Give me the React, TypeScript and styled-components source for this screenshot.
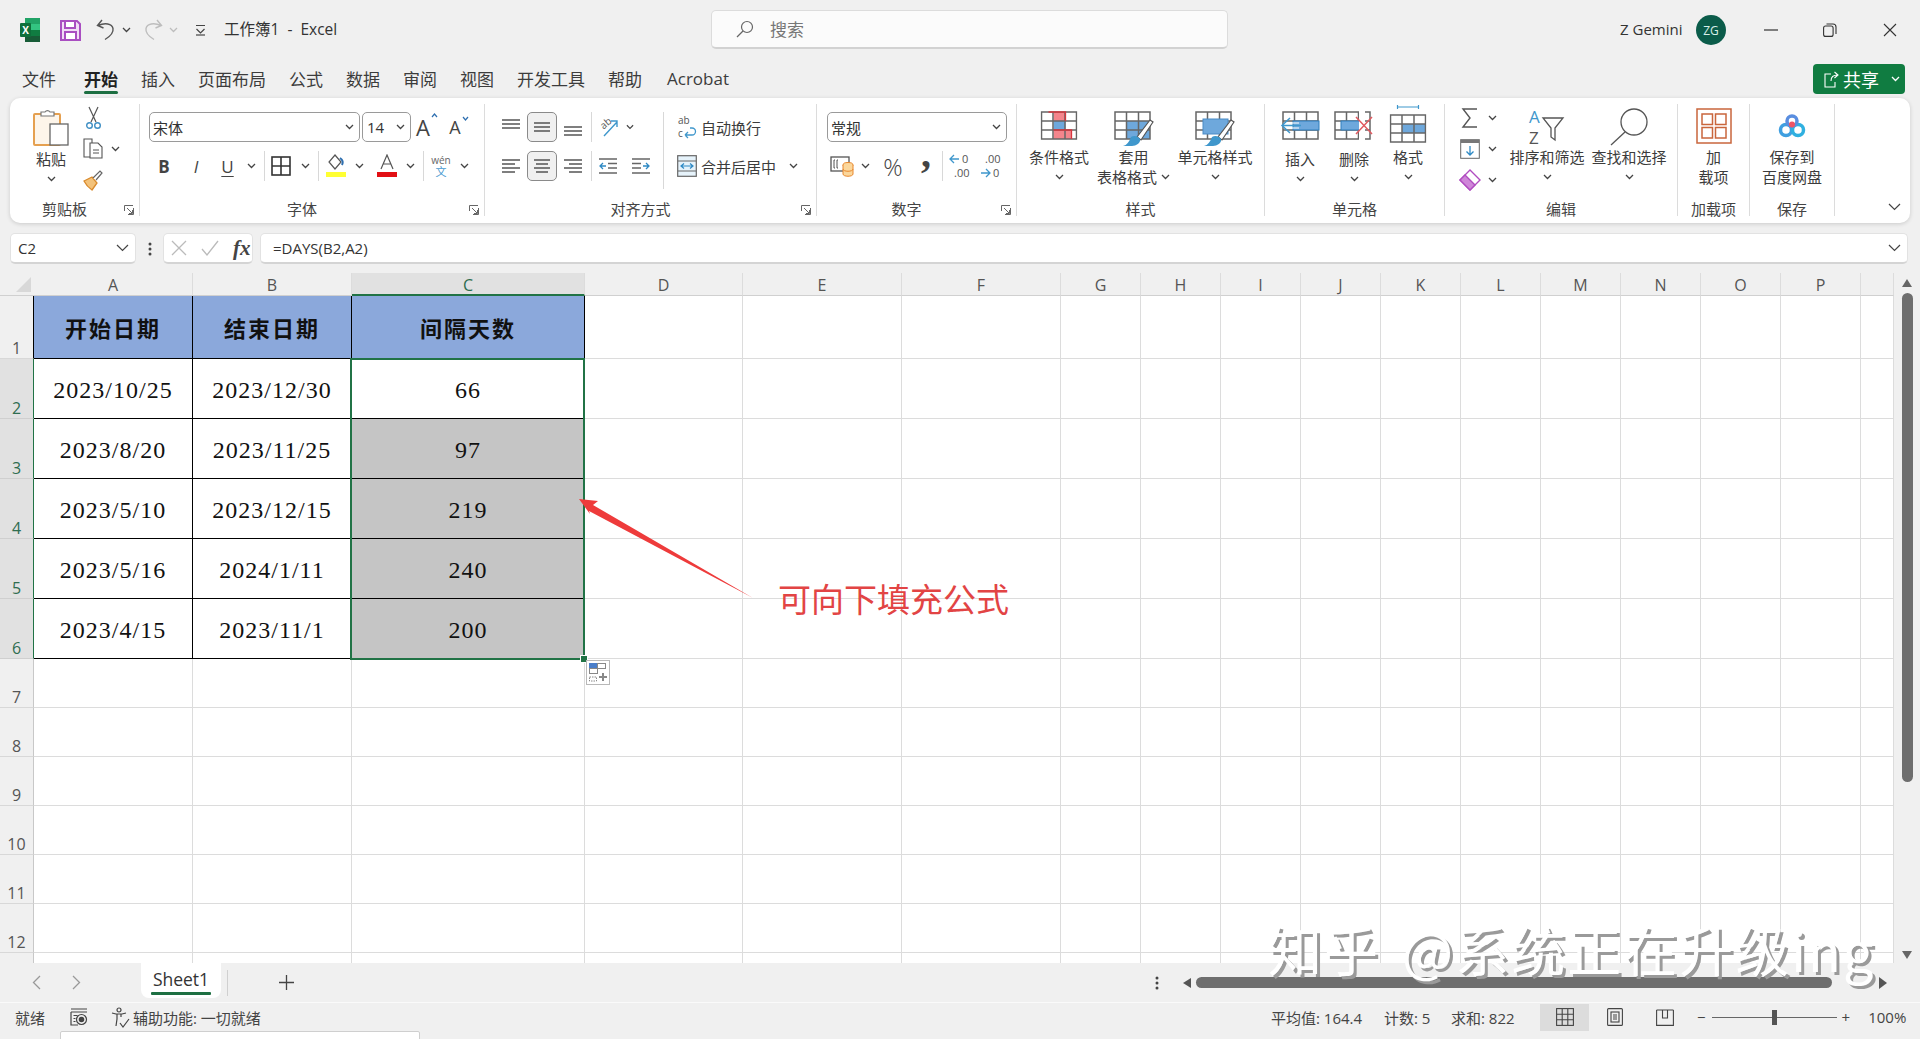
import React from 'react'
import styled, { createGlobalStyle } from 'styled-components'

const UI_FONT = '"Open Sans", "Noto Sans CJK SC", sans-serif'
const CJK_FONT = '"Noto Sans CJK SC", "Open Sans", sans-serif'
const GREEN = '#217346'

const GlobalStyle = createGlobalStyle`
  html, body { margin: 0; padding: 0; background: #f0f0f0; }
  * { box-sizing: border-box; }
  #root { width: 1920px; height: 1039px; }
`

const Page = styled.div`
  position: relative;
  width: 1920px;
  height: 1039px;
  overflow: hidden;
  display: flex;
  flex-direction: column;
  background: #f0f0f0;
  color: #3c3c3c;
  font-family: ${CJK_FONT};
`

/* ---------- title bar ---------- */
const TitleBar = styled.header`
  height: 58px;
  flex: none;
  display: grid;
  grid-template-columns: 711px 517px 1fr;
  align-items: center;
  padding-top: 2px;
`
const QuickAccess = styled.div`
  display: flex;
  align-items: center;
  padding-left: 20px;
`
const DocTitle = styled.span`
  margin: -3px 0 0 18px;
  font-size: 15.5px;
  font-family: ${UI_FONT};
  white-space: pre;
  color: #333;
`
const SearchBox = styled.div`
  height: 39px;
  margin-top: -2px;
  background: #fbfbfb;
  border: 1px solid #dcdcdc;
  border-bottom: 2px solid #d2d2d2;
  border-radius: 5px;
  display: flex;
  align-items: center;
  padding-left: 24px;
  gap: 16px;
  font-size: 17px;
  line-height: 34px;
  color: #777;
`
const UserArea = styled.div`
  display: flex;
  align-items: center;
  padding-left: 392px;
  font-family: ${UI_FONT};
`
const UserName = styled.span`
  font-size: 15px;
  width: 65px;
  margin-top: -2px;
  white-space: nowrap;
  color: #333;
`
const Avatar = styled.div`
  width: 30px;
  height: 30px;
  margin-left: 11px;
  border-radius: 50%;
  background: #0b5c4a;
  color: #d8efe8;
  font-size: 12px;
  display: flex;
  align-items: center;
  justify-content: center;
`
const WindowButton = styled.div<{ $ml: number }>`
  width: 16px;
  height: 16px;
  margin-left: ${(p) => p.$ml}px;
  display: flex;
  align-items: center;
  justify-content: center;
`

/* ---------- tabs ---------- */
const TabBar = styled.nav`
  height: 40px;
  flex: none;
  display: flex;
  align-items: flex-start;
  padding-left: 22px;
  gap: 23px;
  position: relative;
`
const Tab = styled.div<{ $active?: boolean }>`
  position: relative;
  height: 36px;
  line-height: 41px;
  font-size: 17px;
  font-weight: ${(p) => (p.$active ? 700 : 400)};
  color: ${(p) => (p.$active ? '#222' : '#3c3c3c')};
  font-family: ${CJK_FONT};
  white-space: nowrap;
  ${(p) => (p.$active ? 'margin-left: 5px;' : '')}
  ${(p) =>
    p.$active &&
    `&::after {
      content: '';
      position: absolute;
      left: 0;
      right: 0;
      bottom: 0;
      height: 3px;
      border-radius: 2px;
      background: #1d6f42;
    }`}
`
const TabText = styled(Tab)`
  font-family: ${UI_FONT};
  margin-left: 2px;
`
const ShareButton = styled.div`
  position: absolute;
  left: 1813px;
  top: 6px;
  width: 92px;
  height: 30px;
  border-radius: 4px;
  background: #107c41;
  color: #fff;
  font-size: 18px;
  line-height: 28px;
  display: flex;
  align-items: center;
  padding-left: 11px;
  gap: 3px;
`

/* ---------- ribbon ---------- */
const Ribbon = styled.section`
  position: relative;
  height: 125px;
  flex: none;
  margin: 0 10px;
  padding-top: 6px;
  background: #fff;
  border-radius: 10px;
  box-shadow: 0 1px 4px rgba(0, 0, 0, 0.16);
  display: flex;
  align-items: flex-start;
`
const Group = styled.div<{ $w: number; $last?: boolean }>`
  width: ${(p) => p.$w}px;
  height: 112px;
  flex: none;
  display: flex;
  flex-direction: column;
  border-right: ${(p) => (p.$last ? 'none' : '1px solid #dcdcdc')};
`
const GroupBody = styled.div<{ $pl?: number; $col?: boolean }>`
  height: 92px;
  flex: none;
  display: flex;
  flex-direction: ${(p) => (p.$col ? 'column' : 'row')};
  padding-left: ${(p) => p.$pl ?? 0}px;
`
const GroupLabel = styled.div<{ $launcher?: boolean }>`
  position: relative;
  height: 20px;
  line-height: 26px;
  font-size: 15px;
  text-align: center;
  padding-right: ${(p) => (p.$launcher ? 20 : 0)}px;
  color: #444;
`
const Launcher = styled.span`
  position: absolute;
  right: 5px;
  top: 9px;
  width: 10px;
  height: 10px;
  display: flex;
`
const BigTool = styled.div<{ $w: number; $icon?: number }>`
  width: ${(p) => p.$w}px;
  flex: none;
  display: flex;
  flex-direction: column;
  align-items: center;
  padding-top: ${(p) => p.$icon ?? 43}px;
  position: relative;
  font-size: 15px;
  line-height: 20px;
  color: #3c3c3c;
  white-space: nowrap;
`
const BigIcon = styled.span<{ $top: number }>`
  position: absolute;
  top: ${(p) => p.$top}px;
  left: 50%;
  transform: translateX(-50%);
  display: flex;
`
const ToolLine = styled.span`
  height: 20px;
  display: flex;
  align-items: center;
  justify-content: center;
  gap: 4px;
`
const Rows = styled.div<{ $w?: number }>`
  display: flex;
  flex-direction: column;
  gap: 9px;
  padding-top: 8px;
  ${(p) => (p.$w ? `width: ${p.$w}px; flex: none;` : '')}
`
const Row = styled.div<{ $pl?: number }>`
  height: 30px;
  display: flex;
  align-items: center;
  padding-left: ${(p) => p.$pl ?? 0}px;
`
const Stack = styled.div`
  display: flex;
  flex-direction: column;
  margin-top: -2px;
`
const StackRow = styled.div`
  height: 31.5px;
  display: flex;
  align-items: center;
`
const Slot = styled.span<{ $w: number }>`
  width: ${(p) => p.$w}px;
  flex: none;
  height: 30px;
  display: flex;
  align-items: center;
  justify-content: center;
  font-family: ${UI_FONT};
  color: #444;
`
const PressedSlot = styled(Slot)`
  background: #f0f0f0;
  border: 1px solid #8a8a8a;
  border-radius: 5px;
`
const Gap = styled.span<{ $w: number }>`
  width: ${(p) => p.$w}px;
  flex: none;
`
const MiniSep = styled.span`
  width: 1px;
  height: 30px;
  flex: none;
  background: #d8d8d8;
`
const BlockSep = styled.span`
  width: 1px;
  height: 77px;
  margin-top: 8px;
  flex: none;
  background: #d8d8d8;
`
const SelectBox = styled.div<{ $w: number; $ml?: number }>`
  width: ${(p) => p.$w}px;
  margin-left: ${(p) => p.$ml ?? 0}px;
  flex: none;
  height: 30px;
  border: 1px solid #9a9a9a;
  border-radius: 5px;
  display: flex;
  align-items: center;
  justify-content: space-between;
  padding: 0 5px 0 3px;
  font-size: 15px;
  color: #333;
`
const SizeText = styled.span`
  font-family: ${UI_FONT};
  font-size: 15px;
  padding-left: 1px;
`
const LetterButton = styled.span<{ $italic?: boolean; $under?: boolean; $weight?: number; $size?: number }>`
  font-family: ${UI_FONT};
  font-size: ${(p) => p.$size ?? 17}px;
  font-weight: ${(p) => p.$weight ?? 400};
  font-style: ${(p) => (p.$italic ? 'italic' : 'normal')};
  text-decoration: ${(p) => (p.$under ? 'underline' : 'none')};
  text-underline-offset: 3px;
  color: #444;
`
const GrowGlyph = styled.span`
  display: flex;
  align-items: flex-start;
  gap: 1px;
`
const RowText = styled.span<{ $w?: number }>`
  font-size: 15px;
  color: #3c3c3c;
  white-space: nowrap;
  ${(p) => (p.$w ? `width: ${p.$w}px;` : '')}
`
const WenGlyph = styled.span`
  display: flex;
  flex-direction: column;
  align-items: center;
  font-size: 10px;
  line-height: 11px;
  color: #666;
`
const WenChar = styled.span`
  color: #4a9ad0;
  font-size: 11px;
`
const Percent = styled.span`
  font-family: ${UI_FONT};
  font-size: 24px;
  font-weight: 300;
  color: #444;
`
const Comma = styled.span`
  font-family: 'Liberation Serif', serif;
  font-weight: 700;
  font-size: 40px;
  line-height: 30px;
  height: 30px;
  color: #444;
  transform: translateY(-12px);
`
const CollapseButton = styled.span`
  position: absolute;
  right: 9px;
  bottom: 12px;
  display: flex;
`

/* ---------- formula bar ---------- */
const FormulaBar = styled.div`
  height: 31px;
  flex: none;
  margin: 10px 12px 9px 10px;
  display: flex;
  align-items: stretch;
`
const FieldBox = styled.div<{ $w?: number; $pl?: number }>`
  ${(p) => (p.$w ? `width: ${p.$w}px; flex: none;` : 'flex: 1;')}
  background: #fff;
  border: 1px solid #e2e2e2;
  border-bottom: 2px solid #d4d4d4;
  border-radius: 5px;
  display: flex;
  align-items: center;
  justify-content: space-between;
  padding: 0 6px 0 ${(p) => p.$pl ?? 12}px;
  font-family: ${UI_FONT};
  font-size: 15px;
  color: #333;
`
const FxBox = styled(FieldBox)`
  padding: 0 0 0 7px;
  margin-right: 7px;
  justify-content: flex-start;
  gap: 14px;
`
const FxText = styled.span`
  font-family: 'Liberation Serif', serif;
  font-style: italic;
  font-weight: 700;
  font-size: 21px;
  color: #444;
`
const DotsColumn = styled.div`
  width: 27px;
  flex: none;
  display: flex;
  align-items: center;
  justify-content: center;
  font-weight: 700;
`

/* ---------- sheet ---------- */
const SheetArea = styled.div`
  height: 690px;
  flex: none;
  display: flex;
`
const COLS = [34, 159, 159, 233, 158, 159, 159, 80, 80, 80, 80, 80, 80, 80, 80, 80, 80, 33]
const LETTERS = ['A', 'B', 'C', 'D', 'E', 'F', 'G', 'H', 'I', 'J', 'K', 'L', 'M', 'N', 'O', 'P', '']
const ROW_COUNT = 13

const Sheet = styled.div`
  position: relative;
  width: 1894px;
  height: 690px;
  overflow: hidden;
  background: #fff;
  display: grid;
  grid-template-columns: ${COLS.map((c) => c + 'px').join(' ')};
  grid-template-rows: 23px 63px repeat(5, 60px) repeat(7, 49px);
`
const Corner = styled.div`
  background: #f0f0f0;
  border-bottom: 1px solid #d0d0d0;
  display: flex;
  align-items: flex-end;
  justify-content: flex-end;
  padding: 0 3px 3px 0;
`
const ColHead = styled.div<{ $active?: boolean }>`
  background: ${(p) => (p.$active ? '#e1e1e1' : '#f0f0f0')};
  border-right: 1px solid #dcdcdc;
  border-bottom: ${(p) => (p.$active ? `2px solid ${GREEN}` : '1px solid #d0d0d0')};
  color: ${(p) => (p.$active ? '#2f6d50' : '#555')};
  font-family: ${UI_FONT};
  font-size: 16px;
  line-height: 24px;
  text-align: center;
`
const RowHead = styled.div<{ $active?: boolean; $edge?: 'black' | 'green' }>`
  background: ${(p) => (p.$active ? '#e1e1e1' : '#f0f0f0')};
  color: ${(p) => (p.$active ? '#2f6d50' : '#555')};
  border-bottom: 1px solid ${(p) => (p.$active ? '#cfcfcf' : '#d8d8d8')};
  border-right: 1px solid ${(p) => (p.$edge === 'black' ? '#000' : p.$edge === 'green' ? GREEN : '#c8c8c8')};
  font-family: ${UI_FONT};
  font-size: 16px;
  line-height: 20px;
  display: flex;
  align-items: flex-end;
  justify-content: center;
`
const Cell = styled.div<{ $table?: boolean; $fill?: string; $head?: boolean }>`
  background: ${(p) => p.$fill ?? '#fff'};
  border-right: 1px solid ${(p) => (p.$table ? '#000' : '#dcdcdc')};
  border-bottom: 1px solid ${(p) => (p.$table ? '#000' : '#dcdcdc')};
  display: flex;
  align-items: center;
  justify-content: center;
  color: #111;
  font-family: ${(p) => (p.$head ? CJK_FONT : '"Liberation Serif", serif')};
  font-size: ${(p) => (p.$head ? 22 : 24)}px;
  font-weight: ${(p) => (p.$head ? 700 : 400)};
  letter-spacing: ${(p) => (p.$head ? 2 : 1)}px;
  padding-top: ${(p) => (p.$head ? 0 : 3)}px;
`
const Selection = styled.div`
  position: absolute;
  left: 350px;
  top: 85px;
  width: 235px;
  height: 302px;
  border: 2px solid ${GREEN};
  pointer-events: none;
`
const FillHandle = styled.span`
  position: absolute;
  right: -5px;
  bottom: -5px;
  width: 8px;
  height: 8px;
  background: ${GREEN};
  border: 1px solid #fff;
`
const PasteOptions = styled.div`
  position: absolute;
  left: 586px;
  top: 387px;
  width: 24px;
  height: 25px;
  background: #fff;
  border: 1px solid #b8b8b8;
  display: flex;
  align-items: center;
  justify-content: center;
`
const ArrowLayer = styled.svg`
  position: absolute;
  left: 570px;
  top: 220px;
`
const Annotation = styled.div`
  position: absolute;
  left: 778px;
  top: 301px;
  font-size: 33px;
  line-height: 48px;
  color: #e24444;
  white-space: nowrap;
`
const VScroll = styled.div`
  width: 26px;
  flex: none;
  display: flex;
  flex-direction: column;
  align-items: center;
  padding: 6px 0 4px;
`
const TriUp = styled.span`
  width: 0;
  height: 0;
  border-left: 5px solid transparent;
  border-right: 5px solid transparent;
  border-bottom: 8px solid #666;
`
const TriDown = styled(TriUp)`
  margin-top: auto;
  transform: rotate(180deg);
`
const VThumb = styled.div`
  width: 11px;
  height: 489px;
  margin-top: 6px;
  border-radius: 6px;
  background: #6e6e6e;
`

/* ---------- sheet bar ---------- */
const SheetBar = styled.div`
  height: 39px;
  flex: none;
  display: flex;
  align-items: center;
  font-family: ${UI_FONT};
`
const NavSlot = styled.span<{ $w: number; $ml?: number }>`
  width: ${(p) => p.$w}px;
  margin-left: ${(p) => p.$ml ?? 0}px;
  height: 20px;
  flex: none;
  display: flex;
  align-items: center;
  justify-content: center;
  font-size: 18px;
  font-weight: 700;
  color: #444;
`
const SheetTab = styled.div`
  position: relative;
  width: 80px;
  height: 35px;
  margin-left: 55px;
  align-self: flex-start;
  flex: none;
  background: #fff;
  border-radius: 0 0 8px 8px;
  text-align: center;
  font-size: 17.500px;
  line-height: 32px;
  color: #333;
  &::after {
    content: '';
    position: absolute;
    left: 10px;
    right: 10px;
    bottom: 3px;
    height: 3px;
    background: #1d6f42;
    border-radius: 1px;
  }
`
const TabDivider = styled.span`
  width: 1px;
  height: 26px;
  margin-left: 6px;
  background: #d0d0d0;
`
const HThumb = styled.div`
  width: 636px;
  height: 11px;
  margin-left: 5px;
  border-radius: 6px;
  background: #6e6e6e;
`
const TriLeft = styled.span<{ $ml?: number }>`
  margin-left: ${(p) => p.$ml ?? 0}px;
  width: 0;
  height: 0;
  border-top: 5px solid transparent;
  border-bottom: 5px solid transparent;
  border-right: 8px solid #555;
`
const TriRight = styled.span<{ $ml: number }>`
  margin-left: ${(p) => p.$ml}px;
  width: 0;
  height: 0;
  border-top: 6px solid transparent;
  border-bottom: 6px solid transparent;
  border-left: 8px solid #555;
`

/* ---------- status bar ---------- */
const StatusBar = styled.footer`
  height: 29px;
  flex: none;
  border-top: 1px solid #fafafa;
  display: flex;
  align-items: center;
  padding-left: 15px;
  color: #444;
`
const StatusText = styled.span<{ $ml?: number; $w?: number }>`
  margin-left: ${(p) => p.$ml ?? 0}px;
  ${(p) => (p.$w ? `width: ${p.$w}px;` : '')}
  flex: none;
  white-space: nowrap;
  font-family: ${UI_FONT};
  font-size: 15px;
`
const ViewButton = styled.span<{ $w: number; $on?: boolean; $ml?: number }>`
  width: ${(p) => p.$w}px;
  margin-left: ${(p) => p.$ml ?? 0}px;
  height: 27px;
  flex: none;
  display: flex;
  align-items: center;
  justify-content: center;
  background: ${(p) => (p.$on ? '#dcdcdc' : 'transparent')};
`
const ZoomSlider = styled.div`
  position: relative;
  width: 125px;
  height: 1px;
  margin-left: 6px;
  flex: none;
  background: #666;
`
const ZoomThumb = styled.span`
  position: absolute;
  left: 60px;
  top: -7px;
  width: 5px;
  height: 15px;
  background: #555;
`
const BottomStrip = styled.div`
  flex: 1;
  padding-left: 60px;
`
const TaskWindow = styled.div`
  width: 360px;
  height: 12px;
  background: #fff;
  border: 1px solid #cfcfcf;
  border-radius: 2px 2px 0 0;
`
const Watermark = styled.div`
  position: absolute;
  left: 1268px;
  top: 914px;
  font-size: 54px;
  line-height: 70px;
  white-space: nowrap;
  color: #fff;
  font-family: ${CJK_FONT};
  text-shadow: 3px 3px 0 #9a9a9a;
  letter-spacing: 2px;
  word-spacing: 8px;
  pointer-events: none;
`

/* ---------- icons ---------- */
const Chevron = ({ c = '#444' }: { c?: string }) => (
  <svg width="9" height="6" viewBox="0 0 9 6">
    <path d="M1 1l3.5 3.5L8 1" fill="none" stroke={c} strokeWidth="1.3" />
  </svg>
)
const GrowArrow = ({ up }: { up?: boolean }) => (
  <svg width="7" height="8" viewBox="0 0 7 8">
    <path d={up ? 'M1 5l2.500-3L6 5' : 'M1 2l2.500 3L6 2'} fill="none" stroke="#2e6fb0" strokeWidth="1.200" />
  </svg>
)
const LauncherIcon = () => (
  <svg width="10" height="10" viewBox="0 0 10 10" fill="none" stroke="#666">
    <path d="M.5 6V.5H9M9.5 3v6.5H4M3 3l5 5M8.5 5v3.5H5" />
  </svg>
)
const ExcelLogo = () => (
  <svg width="20" height="24" viewBox="0 0 20 24">
    <rect x="5" y="0" width="15" height="6" fill="#21a366" />
    <rect x="5" y="6" width="15" height="6" fill="#33c481" />
    <rect x="5" y="12" width="15" height="6" fill="#107c41" />
    <rect x="5" y="18" width="15" height="6" fill="#185c37" />
    <rect x="0" y="5" width="11" height="14" rx="1" fill="#0e6f3b" />
    <text x="5.5" y="16" fontSize="10" fontWeight="700" fill="#fff" textAnchor="middle" fontFamily="Open Sans">X</text>
  </svg>
)
const SaveIcon = () => (
  <svg width="21" height="21" viewBox="0 0 21 21">
    <path d="M1 1h16l3 3v16H1z" fill="#f0dcf5" stroke="#a94ec1" strokeWidth="2" />
    <rect x="5" y="1" width="10" height="7" fill="#fff" stroke="#a94ec1" strokeWidth="2" />
    <rect x="5" y="12" width="11" height="8" fill="#fff" stroke="#a94ec1" strokeWidth="2" />
  </svg>
)
const UndoIcon = ({ c = '#555', flip }: { c?: string; flip?: boolean }) => (
  <svg width="20" height="22" viewBox="0 0 20 22" style={flip ? { transform: 'scaleX(-1)' } : undefined}>
    <path d="M6 1L1.5 6.5 7.5 9M2 6.5c7-3 14-2 15 3 .8 4.5-3 8-8 11" fill="none" stroke={c} strokeWidth="1.4" />
  </svg>
)
const CustomizeIcon = () => (
  <svg width="11" height="12" viewBox="0 0 11 12" fill="none" stroke="#444" strokeWidth="1.2">
    <path d="M1 1.5h9M1.5 5l4 4 4-4" />
    <path d="M1 11h9" />
  </svg>
)
const SearchIcon = () => (
  <svg width="18" height="18" viewBox="0 0 18 18" fill="none" stroke="#666" strokeWidth="1.2">
    <circle cx="11" cy="7" r="5.5" />
    <path d="M7 11l-6 6" />
  </svg>
)
const MinIcon = () => (
  <svg width="14" height="2" viewBox="0 0 14 2">
    <path d="M0 1h14" stroke="#333" strokeWidth="1.2" />
  </svg>
)
const RestoreIcon = () => (
  <svg width="14" height="14" viewBox="0 0 14 14" fill="none" stroke="#333" strokeWidth="1.1">
    <rect x=".6" y="3" width="9.5" height="10.4" rx="2" />
    <path d="M3.5 1h6.5a3 3 0 0 1 3 3v7" />
  </svg>
)
const CloseIcon = () => (
  <svg width="14" height="14" viewBox="0 0 14 14">
    <path d="M1 1l12 12M13 1L1 13" stroke="#333" strokeWidth="1.1" />
  </svg>
)
const ShareIcon = () => (
  <svg width="16" height="17" viewBox="0 0 16 17" fill="none" stroke="#fff" strokeWidth="1.1">
    <path d="M7 3H1v13h10v-5M7 10c0-4 2-6 7-6M10.500 1l3.500 3-3.500 3" />
  </svg>
)
const PasteIcon = () => (
  <svg width="36" height="38" viewBox="0 0 36 38">
    <rect x="1" y="6" width="26" height="31" rx="1" fill="#fdf5ea" stroke="#e5a050" strokeWidth="2" />
    <path d="M8 8V4h4a3 3 0 0 1 5 0h4v4z" fill="#fff" stroke="#777" strokeWidth="1.2" />
    <rect x="17" y="16" width="18" height="21" fill="#fff" stroke="#666" strokeWidth="1.3" />
  </svg>
)
const CutIcon = () => (
  <svg width="15" height="24" viewBox="0 0 15 24" fill="none">
    <path d="M3 1l7 15M12 1L5 16" stroke="#555" strokeWidth="1.2" />
    <circle cx="3.500" cy="19.500" r="2.800" stroke="#3f8fc4" strokeWidth="1.4" />
    <circle cx="11.500" cy="19.500" r="2.800" stroke="#3f8fc4" strokeWidth="1.4" />
  </svg>
)
const CopyIcon = () => (
  <svg width="20" height="21" viewBox="0 0 20 21" fill="#fff" stroke="#555" strokeWidth="1.1">
    <path d="M1 1h8v18H1z" />
    <path d="M7 5h8l4 4v11H7z" />
    <path d="M10 12h6M10 15h6" strokeWidth="1" />
  </svg>
)
const BrushIcon = () => (
  <svg width="20" height="21" viewBox="0 0 20 21" fill="none">
    <path d="M1 11l8-4 5 6-5 7c-3-2-6-5-8-9z" fill="#f3c27a" stroke="#d98a2c" strokeWidth="1.3" />
    <path d="M10 8l7-7 2 2-6 7" fill="#fff" stroke="#666" strokeWidth="1.2" />
  </svg>
)
const BorderIcon = () => (
  <svg width="20" height="20" viewBox="0 0 20 20" fill="none" stroke="#333" strokeWidth="1.6">
    <rect x="1" y="1" width="18" height="18" />
    <path d="M10 1v18M1 10h18" />
  </svg>
)
const FillColorIcon = () => (
  <svg width="20" height="24" viewBox="0 0 20 24">
    <path d="M9 1l6 7-6 7-6-7z" fill="#fff" stroke="#555" strokeWidth="1.2" />
    <path d="M14 4c3 2 3 5 2 7" fill="none" stroke="#2e6fb0" strokeWidth="2" />
    <rect x="0" y="18" width="20" height="5" fill="#ffff33" />
  </svg>
)
const FontColorIcon = () => (
  <svg width="20" height="24" viewBox="0 0 20 24">
    <path d="M4 15L10 1l6 14M6 10h8" fill="none" stroke="#555" strokeWidth="1.2" />
    <rect x="0" y="18" width="20" height="5" fill="#e20f14" />
  </svg>
)
const AlignLines = ({ ys, xs }: { ys: number[]; xs: [number, number][] }) => (
  <svg width="20" height="20" viewBox="0 0 20 20" stroke="#555" strokeWidth="1.5">
    {ys.map((y, i) => (
      <path key={y} d={`M${xs[i][0]} ${y}H${xs[i][1]}`} />
    ))}
  </svg>
)
const OrientIcon = () => (
  <svg width="22" height="22" viewBox="0 0 22 22" fill="none" overflow="visible">
    <text x="2" y="12" fontSize="10" fill="#555" fontFamily="Open Sans" transform="rotate(-40 6 8)">ab</text>
    <path d="M6 20L19 6M13 5h6v6" stroke="#3f97cc" strokeWidth="1.4" />
  </svg>
)
const IndentIcon = ({ flip }: { flip?: boolean }) => (
  <svg width="20" height="16" viewBox="0 0 20 16" fill="none" style={flip ? { transform: 'scaleX(-1)' } : undefined}>
    <path d="M0 1h18M9 5.500h9M9 10h9M0 15h18" stroke="#666" strokeWidth="1.3" />
    <path d="M7 8H1M4 5L1 8l3 3" stroke="#2e89c4" strokeWidth="1.3" />
  </svg>
)
const WrapIcon = () => (
  <svg width="22" height="25" viewBox="0 0 22 25" fill="none" fontSize="10" fontFamily="Open Sans">
    <text x="2" y="9" fill="#555">ab</text>
    <text x="2" y="22" fill="#555">c</text>
    <path d="M9 20h7a3 3 0 0 0 0-7h-2M9 20l3-3M9 20l3 3" stroke="#3f97cc" strokeWidth="1.3" />
  </svg>
)
const MergeIcon = () => (
  <svg width="20" height="22" viewBox="0 0 20 22" fill="none">
    <rect x=".7" y=".7" width="18.600" height="20.600" fill="#e6f3fb" stroke="#666" strokeWidth="1.2" />
    <path d="M1 6h18M1 16h18" stroke="#666" />
    <path d="M4 11h12M7 8.500L4 11l3 2.500M13 8.500l3 2.500-3 2.500" stroke="#2e89c4" strokeWidth="1.2" />
  </svg>
)
const AccountIcon = () => (
  <svg width="24" height="22" viewBox="0 0 24 22" fill="none">
    <rect x="1" y="2" width="18" height="14" fill="#fff" stroke="#555" strokeWidth="1.3" />
    <path d="M5 5H4v8h1M8 5H7v8h1" stroke="#555" />
    <ellipse cx="18" cy="10" rx="5" ry="2.500" fill="#fbd79c" stroke="#e8872c" />
    <path d="M13 10v9c0 3 10 3 10 0v-9" fill="#fbd79c" stroke="#e8872c" />
    <path d="M13 14c0 3 10 3 10 0" stroke="#e8872c" />
  </svg>
)
const DecimalIcon = ({ left }: { left?: boolean }) => (
  <svg width="22" height="26" viewBox="0 0 22 26" fontSize="11" fontFamily="Open Sans" fill="#555">
    {left ? (
      <>
        <path d="M10 6H1M5 2L1 6l4 4" fill="none" stroke="#3f97cc" strokeWidth="1.3" />
        <text x="13" y="10">0</text>
        <text x="5" y="24">.00</text>
      </>
    ) : (
      <>
        <text x="5" y="10">.00</text>
        <path d="M1 20h9M6 16l4 4-4 4" fill="none" stroke="#3f97cc" strokeWidth="1.3" />
        <text x="13" y="24">0</text>
      </>
    )}
  </svg>
)

// the little table pictures of the styles and cells groups
const TableFrame = ({ w, h, children }: { w: number; h: number; children?: React.ReactNode }) => (
  <svg width={w + 2} height={h + 2} viewBox={`-1 -1 ${w + 2} ${h + 2}`} fill="none">
    {children}
  </svg>
)
const GridLines = ({ dx = 0 }: { dx?: number }) => (
  <g stroke="#666" strokeWidth="1.5" fill="none">
    <rect x={dx} y="0" width="35" height="27" />
    <path d={`M${dx + 11.500} 0v27M${dx + 23.500} 0v27M${dx} 9h35M${dx} 18h35`} />
  </g>
)
const CondFormatIcon = () => (
  <TableFrame w={35} h={27}>
    <rect x="12" y="0" width="12" height="9" fill="#f4858c" />
    <rect x="12" y="9" width="12" height="9" fill="#6ea8dc" />
    <rect x="12" y="18" width="18" height="9" fill="#f4858c" />
    <GridLines />
    <path d="M7 0h17v9M12 18h18v9" stroke="#d8363e" strokeWidth="1.3" />
  </TableFrame>
)
const Paintbrush = ({ x, y }: { x: number; y: number }) => (
  <g transform={`translate(${x} ${y})`}>
    <path d="M14 17L27 0l3 2-12 18z" fill="#fff" stroke="#555" strokeWidth="1.2" />
    <path d="M8 17c3-2 7-1 9 2 1 4-4 7-8 7H0c4-1 6-4 8-9z" fill="#3f97cc" />
  </g>
)
const TableStyleIcon = () => (
  <svg width="40" height="37" viewBox="-1 -1 40 37" fill="none">
    <rect x="11.500" y="9" width="23.500" height="18" fill="#6ea8dc" />
    <GridLines />
    <Paintbrush x={8} y={8} />
  </svg>
)
const CellStyleIcon = () => (
  <svg width="40" height="37" viewBox="-1 -1 40 37" fill="none">
    <GridLines />
    <rect x="7" y="7" width="25" height="15" fill="#6ea8dc" stroke="#4a8bc6" />
    <Paintbrush x={8} y={8} />
  </svg>
)
const InsertIcon = () => (
  <TableFrame w={38} h={27}>
    <GridLines dx={2} />
    <rect x="12" y="9" width="26" height="9" fill="#6ea8dc" stroke="#2e7fbd" />
    <path d="M20 13.500H2M9 6L1 13.500 9 21" stroke="#3f97cc" strokeWidth="1.5" />
    <path d="M18 11H8M18 16H8" stroke="#fff" />
  </TableFrame>
)
const DeleteIcon = () => (
  <TableFrame w={38} h={27}>
    <GridLines />
    <rect x="6" y="9" width="19" height="9" fill="#6ea8dc" stroke="#2e7fbd" />
    <rect x="24" y="-1" width="6" height="30" fill="#fff" />
    <path d="M21 5l16 17M37 5L21 22" stroke="#e05a60" strokeWidth="1.5" />
  </TableFrame>
)
const FormatIcon = () => (
  <svg width="37" height="38" viewBox="-1 -1 37 38" fill="none">
    <path d="M7 1h21M7 -1v4M28 -1v4" stroke="#3f97cc" strokeWidth="1.2" />
    <g transform="translate(0 9)">
      <rect x="11.500" y="9" width="23.500" height="9" fill="#6ea8dc" />
      <GridLines />
    </g>
  </svg>
)
const SigmaIcon = () => (
  <svg width="18" height="20" viewBox="0 0 18 20" fill="none">
    <path d="M16 1H2l7 9-7 9h14" stroke="#555" strokeWidth="1.4" />
  </svg>
)
const FillDownIcon = () => (
  <svg width="20" height="20" viewBox="0 0 20 20" fill="none">
    <rect x=".7" y=".7" width="18.600" height="18.600" fill="#fff" stroke="#666" />
    <rect x="1" y="1" width="18" height="3" fill="#777" />
    <path d="M10 7v9M6.500 12.500L10 16l3.500-3.500" stroke="#2e89c4" strokeWidth="1.3" />
  </svg>
)
const EraserIcon = () => (
  <svg width="22" height="22" viewBox="0 0 22 22">
    <path d="M11 1l10 10-10 10L1 11z" fill="#fff" stroke="#b04cc0" strokeWidth="1.4" />
    <path d="M1 11l5-5 10 10-5 5z" fill="#cf86d9" stroke="#b04cc0" strokeWidth="1.400" />
  </svg>
)
const SortIcon = () => (
  <svg width="38" height="38" viewBox="0 0 38 38" fill="none" fontFamily="Open Sans" fontSize="17">
    <text x="1" y="15" fill="#3f97cc">A</text>
    <text x="1" y="36" fill="#555">Z</text>
    <path d="M15 10h20l-8 10v12l-4-3v-9z" stroke="#555" strokeWidth="1.3" />
  </svg>
)
const FindIcon = () => (
  <svg width="38" height="38" viewBox="0 0 38 38" fill="none" stroke="#555" strokeWidth="1.3">
    <circle cx="24" cy="14" r="13" />
    <path d="M15 24L1 37" />
  </svg>
)
const AddinIcon = () => (
  <svg width="36" height="36" viewBox="0 0 36 36" fill="none" stroke="#c9663c" strokeWidth="1.5">
    <rect x="1" y="1" width="34" height="34" />
    <rect x="6" y="6" width="10.500" height="10.500" />
    <rect x="19.500" y="6" width="10.500" height="10.500" />
    <rect x="6" y="19.500" width="10.500" height="10.500" />
    <rect x="19.500" y="19.500" width="10.500" height="10.500" />
  </svg>
)
const BaiduIcon = () => (
  <svg width="28" height="24" viewBox="0 0 28 24" fill="none" strokeWidth="3.500">
    <circle cx="8" cy="16" r="5.500" stroke="#3f9fe0" />
    <circle cx="20" cy="16" r="5.500" stroke="#2fb0e0" />
    <circle cx="14" cy="7" r="5" stroke="#5a8ee0" />
    <circle cx="14" cy="10.500" r="3" fill="#ee5566" stroke="none" />
  </svg>
)
const NameDots = () => (
  <svg width="4" height="14" viewBox="0 0 4 14" fill="#444">
    <circle cx="2" cy="2" r="1.500" />
    <circle cx="2" cy="7" r="1.500" />
    <circle cx="2" cy="12" r="1.500" />
  </svg>
)
const XMark = () => (
  <svg width="16" height="16" viewBox="0 0 16 16">
    <path d="M1 1l14 14M15 1L1 15" stroke="#bbb" strokeWidth="1.3" />
  </svg>
)
const CheckMark = () => (
  <svg width="18" height="16" viewBox="0 0 18 16">
    <path d="M1 9l5 6L17 1" fill="none" stroke="#bbb" strokeWidth="1.3" />
  </svg>
)
const BigChevron = () => (
  <svg width="13" height="8" viewBox="0 0 13 8">
    <path d="M1 1l5.500 5.500L12 1" fill="none" stroke="#444" strokeWidth="1.200" />
  </svg>
)
const NavArrow = ({ left }: { left?: boolean }) => (
  <svg width="9" height="15" viewBox="0 0 9 15">
    <path d={left ? 'M8 1L1.500 7.500 8 14' : 'M1 1l6.500 6.500L1 14'} fill="none" stroke="#999" strokeWidth="1.3" />
  </svg>
)
const PlusIcon = () => (
  <svg width="15" height="15" viewBox="0 0 15 15">
    <path d="M7.500 0v15M0 7.500h15" stroke="#444" strokeWidth="1.300" />
  </svg>
)
const MacroIcon = () => (
  <svg width="18" height="18" viewBox="0 0 18 18" fill="none" stroke="#444" strokeWidth="1.2">
    <path d="M1 1h16M1 4h16M1 4v13h7" />
    <circle cx="11.500" cy="11.500" r="5" />
    <circle cx="11.500" cy="11.500" r="2.200" fill="#444" />
    <path d="M3.500 7.500h4M3.500 10.500h2M3.500 13.500h2" />
  </svg>
)
const AccessIcon = () => (
  <svg width="19" height="21" viewBox="0 0 19 21" fill="none" stroke="#444" strokeWidth="1.2">
    <circle cx="8" cy="3" r="2" />
    <path d="M1 6l4 1h6l4-1M6 7v5l-1 7M10 7v3" />
    <path d="M9 16l3 4 6-8" />
  </svg>
)
const NormalViewIcon = () => (
  <svg width="18" height="18" viewBox="0 0 18 18" fill="none" stroke="#444" strokeWidth="1.1">
    <rect x=".6" y=".6" width="16.800" height="16.800" />
    <path d="M6.200 1v16M11.800 1v16M1 6.200h16M1 11.800h16" />
  </svg>
)
const LayoutViewIcon = () => (
  <svg width="16" height="18" viewBox="0 0 16 18" fill="none" stroke="#444" strokeWidth="1.1">
    <rect x=".6" y=".6" width="14.800" height="16.800" rx="1" />
    <rect x="4" y="4" width="8" height="10" />
    <path d="M6 7h4M6 9h4M6 11h4" />
  </svg>
)
const BreakViewIcon = () => (
  <svg width="18" height="17" viewBox="0 0 18 17" fill="none" stroke="#444" strokeWidth="1.1">
    <path d="M.6 1v15.400h16.800V1M.6 1h16.800" />
    <path d="M6.500 1v8h5V1" />
  </svg>
)
const PasteOptionsIcon = () => (
  <svg width="18" height="19" viewBox="0 0 18 19" fill="none">
    <rect x=".5" y=".5" width="8" height="5" fill="#4a7ec9" stroke="#4a7ec9" />
    <rect x="8.500" y=".5" width="8" height="5" stroke="#888" />
    <rect x=".5" y="5.500" width="8" height="5" stroke="#888" />
    <path d="M.5 14h7v4h-7z" stroke="#888" strokeDasharray="1.500 1" />
    <path d="M14 10v8M10 14h8" stroke="#888" strokeWidth="2" />
  </svg>
)
const SortCorner = () => (
  <svg width="15" height="15" viewBox="0 0 15 15">
    <path d="M15 0v15H0z" fill="#d8d8d8" />
  </svg>
)

const TabNames = ['文件', '开始', '插入', '页面布局', '公式', '数据', '审阅', '视图', '开发工具', '帮助']

const TABLE: string[][] = [
  ['开始日期', '结束日期', '间隔天数'],
  ['2023/10/25', '2023/12/30', '66'],
  ['2023/8/20', '2023/11/25', '97'],
  ['2023/5/10', '2023/12/15', '219'],
  ['2023/5/16', '2024/1/11', '240'],
  ['2023/4/15', '2023/11/1', '200'],
]

const SheetGrid = () => {
  const cells: React.ReactNode[] = []
  cells.push(
    <Corner key="corner">
      <SortCorner />
    </Corner>,
  )
  LETTERS.forEach((l) => {
    cells.push(
      <ColHead key={'h' + l} $active={l === 'C'}>
        {l}
      </ColHead>,
    )
  })
  for (let r = 0; r < ROW_COUNT - 1; r++) {
    const inTable = r < TABLE.length
    cells.push(
      <RowHead key={'r' + r} $active={r >= 1 && r <= 5} $edge={r === 0 ? 'black' : inTable ? 'green' : undefined}>
        {r + 1}
      </RowHead>,
    )
    for (let c = 0; c < LETTERS.length; c++) {
      const text = inTable && c < 3 ? TABLE[r][c] : ''
      let fill: string | undefined
      if (r === 0 && c < 3) fill = '#8ba8db'
      if (r >= 2 && r <= 5 && c === 2) fill = '#c5c5c5'
      cells.push(
        <Cell key={r + '-' + c} $table={inTable && c < 3} $fill={fill} $head={r === 0}>
          {text}
        </Cell>,
      )
    }
  }
  // the last row only shows its top few pixels, so it carries no number
  cells.push(<RowHead key="clipped" />)
  for (let c = 0; c < LETTERS.length; c++) cells.push(<Cell key={'clip' + c} />)
  return <>{cells}</>
}

export default function App() {
  return (
    <Page>
      <GlobalStyle />
      <TitleBar>
        <QuickAccess>
          <ExcelLogo />
          <Gap $w={20} />
          <SaveIcon />
          <Gap $w={15} />
          <UndoIcon />
          <Gap $w={6} />
          <Chevron />
          <Gap $w={12} />
          <UndoIcon c="#bdbdbd" flip />
          <Gap $w={6} />
          <Chevron c="#bdbdbd" />
          <Gap $w={17} />
          <CustomizeIcon />
          <DocTitle>工作簿1  -  Excel</DocTitle>
        </QuickAccess>
        <SearchBox>
          <SearchIcon />
          搜索
        </SearchBox>
        <UserArea>
          <UserName>Z Gemini</UserName>
          <Avatar>ZG</Avatar>
          <WindowButton $ml={37}>
            <MinIcon />
          </WindowButton>
          <WindowButton $ml={43}>
            <RestoreIcon />
          </WindowButton>
          <WindowButton $ml={44}>
            <CloseIcon />
          </WindowButton>
        </UserArea>
      </TitleBar>

      <TabBar>
        {TabNames.map((t) => (
          <Tab key={t} $active={t === '开始'}>
            {t}
          </Tab>
        ))}
        <TabText>Acrobat</TabText>
        <ShareButton>
          <ShareIcon />
          共享
          <Gap $w={6} />
          <Chevron c="#fff" />
        </ShareButton>
      </TabBar>

      <Ribbon>
        <Group $w={130}>
          <GroupBody $pl={14}>
            <BigTool $w={54} $icon={45}>
              <BigIcon $top={4}>
                <PasteIcon />
              </BigIcon>
              <ToolLine>粘贴</ToolLine>
              <ToolLine>
                <Chevron />
              </ToolLine>
            </BigTool>
            <Stack>
              <StackRow>
                <Slot $w={30}>
                  <CutIcon />
                </Slot>
              </StackRow>
              <StackRow>
                <Slot $w={30}>
                  <CopyIcon />
                </Slot>
                <Slot $w={14}>
                  <Chevron />
                </Slot>
              </StackRow>
              <StackRow>
                <Slot $w={30}>
                  <BrushIcon />
                </Slot>
              </StackRow>
            </Stack>
          </GroupBody>
          <GroupLabel $launcher>
            剪贴板
            <Launcher>
              <LauncherIcon />
            </Launcher>
          </GroupLabel>
        </Group>

        <Group $w={345}>
          <GroupBody>
            <Rows>
              <Row $pl={9}>
                <SelectBox $w={211}>
                  宋体
                  <Chevron />
                </SelectBox>
                <SelectBox $w={49} $ml={2}>
                  <SizeText>14</SizeText>
                  <Chevron />
                </SelectBox>
                <Slot $w={32}>
                  <GrowGlyph>
                    <LetterButton $size={22}>A</LetterButton>
                    <GrowArrow up />
                  </GrowGlyph>
                </Slot>
                <Slot $w={32}>
                  <GrowGlyph>
                    <LetterButton $size={18}>A</LetterButton>
                    <GrowArrow />
                  </GrowGlyph>
                </Slot>
              </Row>
              <Row $pl={8}>
                <Slot $w={32}>
                  <LetterButton $weight={700}>B</LetterButton>
                </Slot>
                <Slot $w={32}>
                  <LetterButton $italic>I</LetterButton>
                </Slot>
                <Slot $w={31}>
                  <LetterButton $under>U</LetterButton>
                </Slot>
                <Slot $w={16}>
                  <Chevron />
                </Slot>
                <Gap $w={5} />
                <MiniSep />
                <Slot $w={32}>
                  <BorderIcon />
                </Slot>
                <Slot $w={16}>
                  <Chevron />
                </Slot>
                <Gap $w={5} />
                <MiniSep />
                <Slot $w={34}>
                  <FillColorIcon />
                </Slot>
                <Slot $w={12}>
                  <Chevron />
                </Slot>
                <Gap $w={5} />
                <Slot $w={34}>
                  <FontColorIcon />
                </Slot>
                <Slot $w={12}>
                  <Chevron />
                </Slot>
                <Gap $w={7} />
                <MiniSep />
                <Slot $w={34}>
                  <WenGlyph>
                    wén
                    <WenChar>文</WenChar>
                  </WenGlyph>
                </Slot>
                <Slot $w={12}>
                  <Chevron />
                </Slot>
              </Row>
            </Rows>
          </GroupBody>
          <GroupLabel $launcher>
            字体
            <Launcher>
              <LauncherIcon />
            </Launcher>
          </GroupLabel>
        </Group>

        <Group $w={332}>
          <GroupBody $pl={10}>
            <Rows $w={168}>
              <Row>
                <Slot $w={31}>
                  <AlignLines ys={[3, 7, 11]} xs={[[1, 19], [1, 19], [1, 19]]} />
                </Slot>
                <Gap $w={1} />
                <PressedSlot $w={30}>
                  <AlignLines ys={[6, 10, 14]} xs={[[2, 18], [2, 18], [2, 18]]} />
                </PressedSlot>
                <Slot $w={31}>
                  <AlignLines ys={[10, 14, 18]} xs={[[1, 19], [1, 19], [1, 19]]} />
                </Slot>
                <Gap $w={3} />
                <MiniSep />
                <Slot $w={34}>
                  <OrientIcon />
                </Slot>
                <Slot $w={8}>
                  <Chevron />
                </Slot>
              </Row>
              <Row>
                <Slot $w={31}>
                  <AlignLines ys={[4, 8, 12, 16]} xs={[[1, 19], [1, 14], [1, 19], [1, 14]]} />
                </Slot>
                <Gap $w={1} />
                <PressedSlot $w={30}>
                  <AlignLines ys={[4, 8, 12, 16]} xs={[[2, 18], [4, 16], [2, 18], [4, 16]]} />
                </PressedSlot>
                <Slot $w={31}>
                  <AlignLines ys={[4, 8, 12, 16]} xs={[[1, 19], [6, 19], [1, 19], [6, 19]]} />
                </Slot>
                <Gap $w={3} />
                <MiniSep />
                <Slot $w={34}>
                  <IndentIcon />
                </Slot>
                <Slot $w={28}>
                  <IndentIcon flip />
                </Slot>
              </Row>
            </Rows>
            <BlockSep />
            <Rows>
              <Row $pl={9}>
                <Slot $w={28}>
                  <WrapIcon />
                </Slot>
                <RowText>自动换行</RowText>
              </Row>
              <Row $pl={9}>
                <Slot $w={28}>
                  <MergeIcon />
                </Slot>
                <RowText $w={88}>合并后居中</RowText>
                <Chevron />
              </Row>
            </Rows>
          </GroupBody>
          <GroupLabel $launcher>
            对齐方式
            <Launcher>
              <LauncherIcon />
            </Launcher>
          </GroupLabel>
        </Group>

        <Group $w={200}>
          <GroupBody>
            <Rows>
              <Row $pl={10}>
                <SelectBox $w={180}>
                  常规
                  <Chevron />
                </SelectBox>
              </Row>
              <Row $pl={10}>
                <Slot $w={30}>
                  <AccountIcon />
                </Slot>
                <Gap $w={2} />
                <Slot $w={12}>
                  <Chevron />
                </Slot>
                <Gap $w={5} />
                <Slot $w={34}>
                  <Percent>%</Percent>
                </Slot>
                <Slot $w={32}>
                  <Comma>,</Comma>
                </Slot>
                <MiniSep />
                <Slot $w={34}>
                  <DecimalIcon left />
                </Slot>
                <Slot $w={28}>
                  <DecimalIcon />
                </Slot>
              </Row>
            </Rows>
          </GroupBody>
          <GroupLabel $launcher>
            数字
            <Launcher>
              <LauncherIcon />
            </Launcher>
          </GroupLabel>
        </Group>

        <Group $w={248}>
          <GroupBody $pl={4}>
            <BigTool $w={76}>
              <BigIcon $top={7}>
                <CondFormatIcon />
              </BigIcon>
              <ToolLine>条件格式</ToolLine>
              <ToolLine>
                <Chevron />
              </ToolLine>
            </BigTool>
            <BigTool $w={73}>
              <BigIcon $top={7}>
                <TableStyleIcon />
              </BigIcon>
              <ToolLine>套用</ToolLine>
              <ToolLine>
                表格格式
                <Chevron />
              </ToolLine>
            </BigTool>
            <BigTool $w={90}>
              <BigIcon $top={7}>
                <CellStyleIcon />
              </BigIcon>
              <ToolLine>单元格样式</ToolLine>
              <ToolLine>
                <Chevron />
              </ToolLine>
            </BigTool>
          </GroupBody>
          <GroupLabel>样式</GroupLabel>
        </Group>

        <Group $w={180}>
          <GroupBody $pl={8}>
            <BigTool $w={54} $icon={45}>
              <BigIcon $top={7}>
                <InsertIcon />
              </BigIcon>
              <ToolLine>插入</ToolLine>
              <ToolLine>
                <Chevron />
              </ToolLine>
            </BigTool>
            <BigTool $w={54} $icon={45}>
              <BigIcon $top={7}>
                <DeleteIcon />
              </BigIcon>
              <ToolLine>删除</ToolLine>
              <ToolLine>
                <Chevron />
              </ToolLine>
            </BigTool>
            <BigTool $w={54}>
              <BigIcon $top={1}>
                <FormatIcon />
              </BigIcon>
              <ToolLine>格式</ToolLine>
              <ToolLine>
                <Chevron />
              </ToolLine>
            </BigTool>
          </GroupBody>
          <GroupLabel>单元格</GroupLabel>
        </Group>

        <Group $w={233}>
          <GroupBody $pl={10}>
            <Stack>
              <StackRow>
                <Slot $w={30}>
                  <SigmaIcon />
                </Slot>
                <Slot $w={14}>
                  <Chevron />
                </Slot>
              </StackRow>
              <StackRow>
                <Slot $w={30}>
                  <FillDownIcon />
                </Slot>
                <Slot $w={14}>
                  <Chevron />
                </Slot>
              </StackRow>
              <StackRow>
                <Slot $w={30}>
                  <EraserIcon />
                </Slot>
                <Slot $w={14}>
                  <Chevron />
                </Slot>
              </StackRow>
            </Stack>
            <Gap $w={9} />
            <BigTool $w={78}>
              <BigIcon $top={4}>
                <SortIcon />
              </BigIcon>
              <ToolLine>排序和筛选</ToolLine>
              <ToolLine>
                <Chevron />
              </ToolLine>
            </BigTool>
            <Gap $w={3} />
            <BigTool $w={80}>
              <BigIcon $top={4}>
                <FindIcon />
              </BigIcon>
              <ToolLine>查找和选择</ToolLine>
              <ToolLine>
                <Chevron />
              </ToolLine>
            </BigTool>
          </GroupBody>
          <GroupLabel>编辑</GroupLabel>
        </Group>

        <Group $w={72}>
          <GroupBody>
            <BigTool $w={71}>
              <BigIcon $top={4}>
                <AddinIcon />
              </BigIcon>
              <ToolLine>加</ToolLine>
              <ToolLine>载项</ToolLine>
            </BigTool>
          </GroupBody>
          <GroupLabel>加载项</GroupLabel>
        </Group>

        <Group $w={85}>
          <GroupBody>
            <BigTool $w={84}>
              <BigIcon $top={10}>
                <BaiduIcon />
              </BigIcon>
              <ToolLine>保存到</ToolLine>
              <ToolLine>百度网盘</ToolLine>
            </BigTool>
          </GroupBody>
          <GroupLabel>保存</GroupLabel>
        </Group>

        <CollapseButton>
          <BigChevron />
        </CollapseButton>
      </Ribbon>

      <FormulaBar>
        <FieldBox $w={126} $pl={7}>
          C2
          <BigChevron />
        </FieldBox>
        <DotsColumn>
          <NameDots />
        </DotsColumn>
        <FxBox $w={90}>
          <XMark />
          <CheckMark />
          <FxText>fx</FxText>
        </FxBox>
        <FieldBox>
          =DAYS(B2,A2)
          <BigChevron />
        </FieldBox>
      </FormulaBar>

      <SheetArea>
        <Sheet>
          <SheetGrid />
          <Selection>
            <FillHandle />
          </Selection>
          <PasteOptions>
            <PasteOptionsIcon />
          </PasteOptions>
          <ArrowLayer width="200" height="120" viewBox="570 493 200 120">
            <path d="M579 499l19 2-5 4 160 93-164-87 1 3z" fill="#ee3b3b" />
          </ArrowLayer>
          <Annotation>可向下填充公式</Annotation>
        </Sheet>
        <VScroll>
          <TriUp />
          <VThumb />
          <TriDown />
        </VScroll>
      </SheetArea>

      <SheetBar>
        <NavSlot $w={20} $ml={26}>
          <NavArrow left />
        </NavSlot>
        <NavSlot $w={20} $ml={20}>
          <NavArrow />
        </NavSlot>
        <SheetTab>Sheet1</SheetTab>
        <TabDivider />
        <NavSlot $w={20} $ml={48}>
          <PlusIcon />
        </NavSlot>
        <NavSlot $w={10} $ml={856}>
          <NameDots />
        </NavSlot>
        <TriLeft $ml={21} />
        <HThumb />
        <TriRight $ml={47} />
      </SheetBar>

      <StatusBar>
        <StatusText>就绪</StatusText>
        <Gap $w={25} />
        <MacroIcon />
        <Gap $w={23} />
        <AccessIcon />
        <StatusText $ml={3} $w={1138}>
          辅助功能: 一切就绪
        </StatusText>
        <StatusText $w={113}>平均值: 164.4</StatusText>
        <StatusText $w={67}>计数: 5</StatusText>
        <StatusText $w={89}>求和: 822</StatusText>
        <ViewButton $w={49} $on>
          <NormalViewIcon />
        </ViewButton>
        <ViewButton $w={52}>
          <LayoutViewIcon />
        </ViewButton>
        <ViewButton $w={48}>
          <BreakViewIcon />
        </ViewButton>
        <StatusText $ml={8}>−</StatusText>
        <ZoomSlider>
          <ZoomThumb />
        </ZoomSlider>
        <StatusText $ml={5}>+</StatusText>
        <StatusText $ml={18}>100%</StatusText>
      </StatusBar>

      <BottomStrip>
        <TaskWindow />
      </BottomStrip>

      <Watermark>知乎 @系统正在升级ing</Watermark>
    </Page>
  )
}
